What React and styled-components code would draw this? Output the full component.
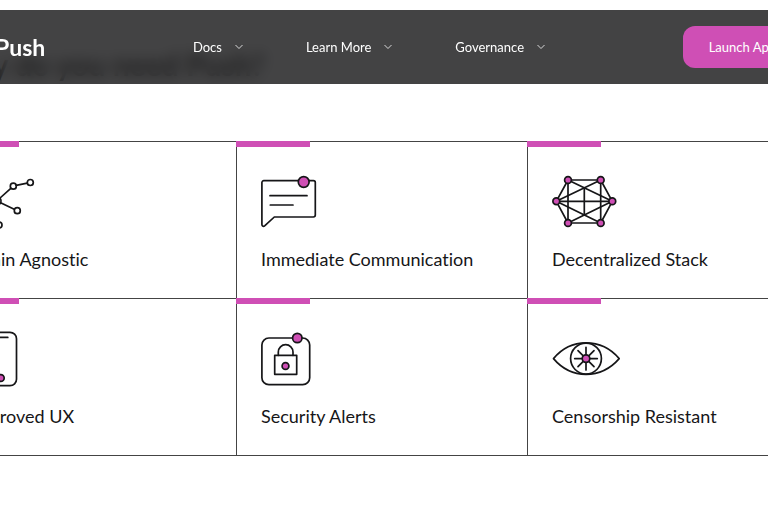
import React from 'react';
import styled, { createGlobalStyle } from 'styled-components';

const PINK = '#cf4fb5';
const INK = '#161618';

const MENUS = ['Docs', 'Learn More', 'Governance'];

const ChainIcon = () => (
    <IconSvg viewBox="0 0 70 56" aria-hidden="true">
        <path d="M29.8 24.2 40.8 14.3M46.2 11.4l11-2.3M30.6 28.7l13.6 6.5M27.4 31l1.2 16.8M23.4 25.2 9 18M23.6 29.2 9.5 40" />
        <circle cx="27" cy="27" r="4" />
        <circle cx="43.3" cy="12.2" r="3" />
        <circle cx="60.3" cy="8.5" r="3" />
        <circle cx="47.3" cy="36.7" r="3" />
        <circle cx="29" cy="51" r="3" />
        <circle cx="6.5" cy="16.5" r="3" />
        <circle cx="7" cy="42" r="3" />
    </IconSvg>
);

const ChatIcon = () => (
    <IconSvg viewBox="0 0 70 56" aria-hidden="true">
        <path d="M2.8 6.7H52.4a1.9 1.9 0 0 1 1.9 1.9V41.1a1.9 1.9 0 0 1-1.9 1.9H13.3L3.9 51.7C2.5 52.9.9 52.3.9 50.6V8.6a1.9 1.9 0 0 1 1.9-1.9Z" />
        <path d="M9 21.7H46M9.3 31H32" />
        <Dot cx="42.7" cy="8" r="5.4" />
    </IconSvg>
);

const NetworkIcon = () => (
    <IconSvg viewBox="0 0 70 56" aria-hidden="true">
        <path d="M16 6H48.7L60.3 27.3 48.7 49H16L4.3 27.3Z" />
        <path d="M16 6V49M48.7 6V49M4.3 27.3H60.3M32.3 14V40.7" />
        <path d="M4.3 27.3 48.7 6M4.3 27.3 48.7 49M60.3 27.3 16 6M60.3 27.3 16 49" />
        <Dot cx="16" cy="6" r="3.4" />
        <Dot cx="48.7" cy="6" r="3.4" />
        <Dot cx="4.3" cy="27.3" r="3.4" />
        <Dot cx="60.3" cy="27.3" r="3.4" />
        <Dot cx="16" cy="49" r="3.4" />
        <Dot cx="48.7" cy="49" r="3.4" />
    </IconSvg>
);

const PhoneIcon = () => (
    <IconSvg viewBox="0 0 70 56" aria-hidden="true">
        <rect x="10" y="1.3" width="36.5" height="53.4" rx="6.5" />
        <path d="M19 6.4H37.8" />
        <Dot cx="30.8" cy="47" r="3.4" />
    </IconSvg>
);

const LockIcon = () => (
    <IconSvg viewBox="0 0 70 56" aria-hidden="true">
        <rect x="0.9" y="7" width="47.8" height="46.7" rx="7" />
        <path d="M17.3 24.3V21a7.3 7.3 0 0 1 14.7 0v3.3" />
        <path d="M13.7 24.3H35.7V43.3H13.7Z" />
        <Dot cx="24.5" cy="35" r="3.4" />
        <Dot cx="36.3" cy="7" r="4.7" />
    </IconSvg>
);

const EyeIcon = () => (
    <IconSvg viewBox="0 0 70 56" aria-hidden="true">
        <path d="M1.5 27.6C9.5 18 20.5 11.9 34 11.9S59 18 67.2 27.6C59 37 47.5 43.3 34 43.3S9.5 37 1.5 27.6Z" />
        <circle cx="34" cy="27.6" r="15.4" />
        <path d="M34 16.3V39M22.7 27.6H45.3M26 19.6 42 35.6M42 19.6 26 35.6" />
        <Dot cx="34" cy="27.6" r="3.8" />
    </IconSvg>
);

const FEATURES = [
    { title: 'Chain Agnostic', Icon: ChainIcon },
    { title: 'Immediate Communication', Icon: ChatIcon },
    { title: 'Decentralized Stack', Icon: NetworkIcon },
    { title: 'Improved UX', Icon: PhoneIcon },
    { title: 'Security Alerts', Icon: LockIcon },
    { title: 'Censorship Resistant', Icon: EyeIcon },
];

const App = () => {
    return (
        <Page>
            <GlobalStyle />
            <Header>
                <HeaderRow>
                    <Logo href="#">Push</Logo>
                    <Nav>
                        {MENUS.map((menu) => (
                            <MenuButton key={menu} type="button">
                                {menu}
                                <Chevron viewBox="0 0 8 6" aria-hidden="true">
                                    <path d="M0.5 1 4 4.5 7.5 1" />
                                </Chevron>
                            </MenuButton>
                        ))}
                    </Nav>
                    <LaunchButton type="button">Launch App</LaunchButton>
                </HeaderRow>
            </Header>
            <Section>
                <Heading>Why do you need Push?</Heading>
                <FeatureGrid>
                    {FEATURES.map(({ title, Icon }) => (
                        <Feature key={title}>
                            <Icon />
                            <FeatureTitle>{title}</FeatureTitle>
                        </Feature>
                    ))}
                </FeatureGrid>
            </Section>
        </Page>
    );
};

export default App;


const GlobalStyle = createGlobalStyle`
    * {
        box-sizing: border-box;
    }

    body {
        margin: 0;
        background: #fff;
        color: ${INK};
        font-family: Lato, "Liberation Sans", sans-serif;
        font-variant-ligatures: none;
    }
`;

const Page = styled.div`
    position: relative;
    min-height: 100vh;
    overflow: hidden;
`;

/* floats over the section so its heading shows through blurred */
const Header = styled.header`
    position: absolute;
    z-index: 1;
    top: 10px;
    left: 0;
    right: 0;
    background: rgba(36, 36, 37, 0.86);
    backdrop-filter: blur(7px);
`;

const HeaderRow = styled.div`
    display: flex;
    align-items: center;
    height: 74px;
    margin: 0 -34px 0 -5px;
`;

const Logo = styled.a`
    color: #fff;
    font-size: 23px;
    font-weight: 700;
    line-height: 28px;
    text-decoration: none;
`;

const Nav = styled.nav`
    display: flex;
    flex: 1;
    justify-content: center;
    gap: 63px;
    padding-left: 10px;
`;

const MenuButton = styled.button`
    display: flex;
    align-items: center;
    gap: 13px;
    padding: 0;
    border: none;
    background: none;
    color: #fff;
    font: inherit;
    font-size: 13px;
    line-height: 20px;
    cursor: pointer;
`;

const Chevron = styled.svg`
    width: 8px;
    height: 6px;
    fill: none;
    stroke: #d8d8d8;
    stroke-width: 1;
`;

const LaunchButton = styled.button`
    height: 42px;
    padding: 0 26px;
    border: none;
    border-radius: 12px;
    background: ${PINK};
    color: #fff;
    font: inherit;
    font-size: 13px;
    line-height: 20px;
    cursor: pointer;
`;

const Section = styled.section`
    margin: 0 -50px 0 -55px;
    padding-top: 44px;
`;

const Heading = styled.h2`
    margin: 0 0 57px;
    font-size: 30px;
    font-weight: 700;
    line-height: 40px;
    color: #000;
`;

const FeatureGrid = styled.div`
    display: grid;
    grid-template-columns: repeat(3, 1fr);
    border-bottom: 1px solid #444;
`;

const Feature = styled.article`
    position: relative;
    display: flex;
    flex-direction: column;
    gap: 17px;
    padding: 32px 24px 27px;
    border-top: 1px solid #444;
    border-left: 1px solid #444;

    &::before {
        content: '';
        position: absolute;
        top: -1px;
        left: -1px;
        width: 74px;
        height: 6px;
        background: ${PINK};
    }
`;

const FeatureTitle = styled.h3`
    margin: 0;
    font-size: 18px;
    font-weight: 400;
    line-height: 24px;
    white-space: nowrap;
`;

const IconSvg = styled.svg`
    width: 70px;
    height: 56px;
    fill: none;
    stroke: ${INK};
    stroke-width: 1.7;
    stroke-linecap: round;
    stroke-linejoin: round;
`;

const Dot = styled.circle`
    fill: ${PINK};
`;
